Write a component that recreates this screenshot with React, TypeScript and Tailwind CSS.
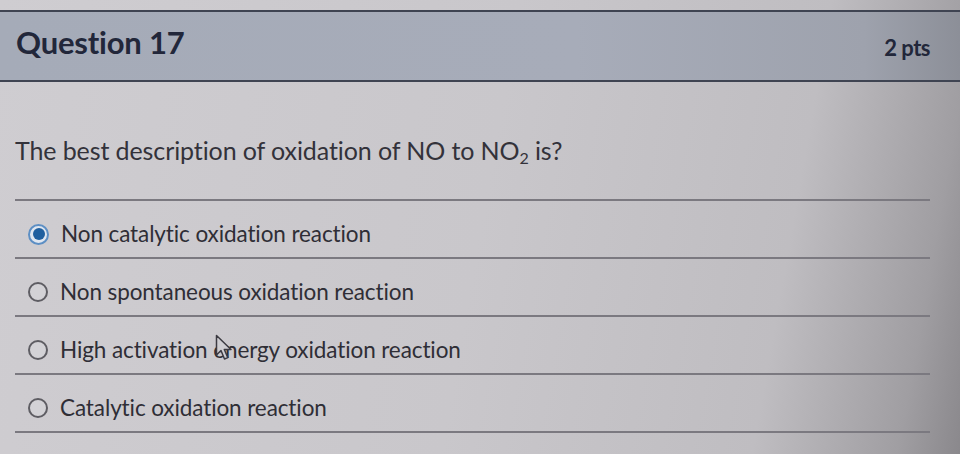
const OPTIONS = [
  { label: "Non catalytic oxidation reaction", checked: true },
  { label: "Non spontaneous oxidation reaction", checked: false },
  { label: "High activation energy oxidation reaction", checked: false, cursorAt: 16 },
  { label: "Catalytic oxidation reaction", checked: false },
];

function Radio({ checked }: { checked: boolean }) {
  if (checked) {
    return (
      <span className="flex h-[21px] w-[21px] shrink-0 items-center justify-center rounded-full border-2 border-[#5d8fc4] bg-[#dfe6f0]">
        <span className="h-[12px] w-[12px] rounded-full bg-[#1f5f9f]" />
      </span>
    );
  }
  return (
    <span className="h-[20px] w-[20px] shrink-0 rounded-full border-2 border-[#5e5d63] bg-[#d3d2d6]" />
  );
}

function Cursor() {
  return (
    <svg
      className="absolute left-[2px] top-[-2px]"
      width="19"
      height="28"
      viewBox="0 0 19 28"
    >
      <path
        d="M1.5 1.5 L1.5 21 L6 16.5 L9.5 25 L12.8 23.6 L9.3 15.5 L16 15.5 Z"
        fill="#cfced2"
        stroke="#3c3b42"
        strokeWidth="1.5"
        strokeLinejoin="round"
      />
    </svg>
  );
}

function Label({ text, cursorAt }: { text: string; cursorAt?: number }) {
  if (cursorAt === undefined) return <>{text}</>;
  return (
    <>
      {text.slice(0, cursorAt)}
      <span className="relative">
        {text.slice(cursorAt)}
        <Cursor />
      </span>
    </>
  );
}

export default function App() {
  return (
    <div
      className="h-[454px] w-full overflow-hidden bg-[linear-gradient(100deg,#cfcdd1_0%,#c9c7cb_50%,#bfbdc1_80%,#a09ea2_94%,#8a888c_100%)] text-[#2e2d35]"
      style={{ fontFamily: "Lato, 'Open Sans', sans-serif" }}
    >
      <div className="h-[10px]" />

      {/* Question header */}
      <div className="flex h-[72px] items-center justify-between border-y-2 border-[#3f4452] bg-[linear-gradient(90deg,#a5abb8_0%,#a7acb9_60%,#9ea2ad_90%,#8c8f98_100%)] pl-[16px] pr-[30px]">
        <span className="mt-[-8px] text-[31px] font-bold tracking-[-0.2px] text-[#22273a]">
          Question 17
        </span>
        <span className="mt-[2px] text-[22px] font-bold tracking-[-0.5px] text-[#22273a]">
          2 pts
        </span>
      </div>

      {/* Body */}
      <div className="pl-[15px] pr-[30px]">
        <p className="pb-[34px] pt-[53px] text-[25px] leading-[30px] tracking-[-0.1px] text-[#33323a]">
          The best description of oxidation of NO to NO
          <sub className="text-[16px]">2</sub> is?
        </p>

        <div className="border-t-2 border-[#7b7980]">
          {OPTIONS.map((opt) => (
            <div
              key={opt.label}
              className="flex h-[58px] items-center gap-[12px] border-b-2 border-[#7b7980] pl-[13px] pt-[10px]"
            >
              <Radio checked={opt.checked} />
              <span className="text-[22.5px] tracking-[-0.1px] text-[#2f2e36]">
                <Label text={opt.label} cursorAt={opt.cursorAt} />
              </span>
            </div>
          ))}
        </div>
      </div>
    </div>
  );
}
